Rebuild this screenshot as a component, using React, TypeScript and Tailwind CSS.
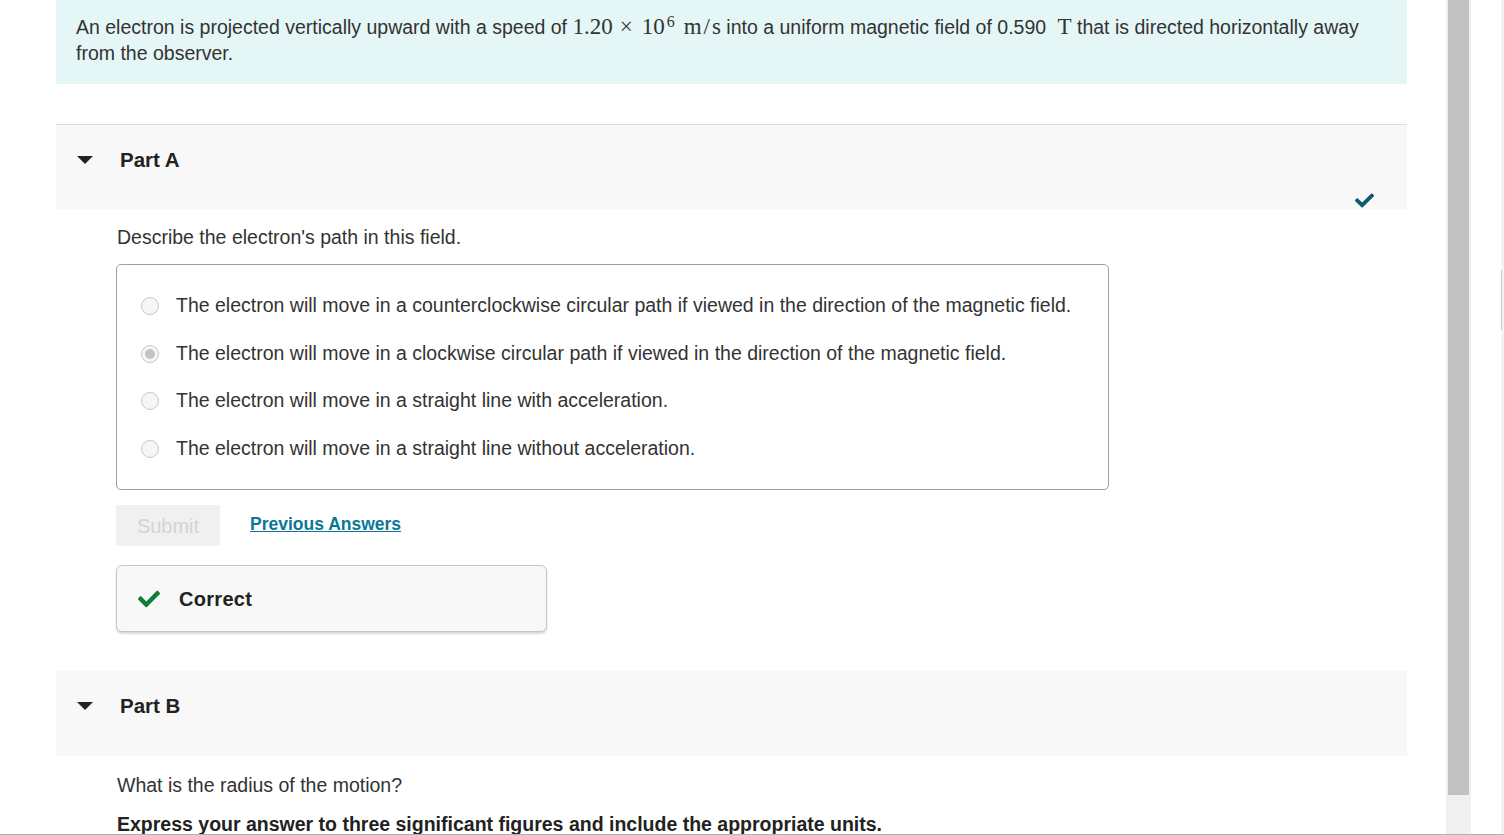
import { FaCheck } from 'react-icons/fa';

const options = [
  'The electron will move in a counterclockwise circular path if viewed in the direction of the magnetic field.',
  'The electron will move in a clockwise circular path if viewed in the direction of the magnetic field.',
  'The electron will move in a straight line with acceleration.',
  'The electron will move in a straight line without acceleration.',
];

function Caret() {
  return (
    <svg width="16" height="8" viewBox="0 0 16 8" className="shrink-0 mt-[8px]">
      <path d="M0 0 L16 0 L8 8 Z" fill="#222" />
    </svg>
  );
}

function PartHeader({ label, bordered, children }: { label: string; bordered?: boolean; children?: React.ReactNode }) {
  return (
    <div className={`relative h-[85px] bg-[#f8f8f8] flex items-start pt-[23px] pl-[21px] ${bordered ? 'border-t border-[#dcdcdc]' : ''}`}>
      <Caret />
      <span className="ml-[27px] text-[20.5px] leading-[24px] font-bold text-[#222]">{label}</span>
      {children}
    </div>
  );
}

function Radio({ selected }: { selected?: boolean }) {
  return (
    <div className="w-[18px] h-[18px] rounded-full border border-[#c8c8c8] bg-[#f6f6f6] flex items-center justify-center shrink-0">
      {selected && <div className="w-[10px] h-[10px] rounded-full bg-[#c4c4c4]" />}
    </div>
  );
}

export default function App() {
  return (
    <div className="relative w-[1504px] h-[835px] overflow-hidden bg-white text-[#333] font-['Liberation_Sans',Arial,sans-serif]">
      <div className="flex h-full">
        {/* page */}
        <div className="w-[1446px] pl-[56px] pr-[39px]">
          <div className="bg-[#e5f6f6] h-[84px] pl-[20px] pr-[40px] pt-[14px] text-[19.5px] leading-[26px] text-[#333]">
            An electron is projected vertically upward with a speed of{' '}
            <span className="font-['Liberation_Serif',serif] text-[23px]">
              1.20<span className="ml-[7px] mr-[9px]">×</span>10<sup className="text-[16px] relative -top-[7px] ml-[2px]">6</sup>
              <span className="ml-[9px]">m<span className="mx-[2px]">/</span>s</span>
            </span>{' '}
            into a uniform magnetic field of 0.590{' '}
            <span className="font-['Liberation_Serif',serif] text-[23px] ml-[6px]">T</span> that is directed horizontally away from the observer.
          </div>

          <div className="mt-[40px]">
            <PartHeader label="Part A" bordered>
              <FaCheck className="absolute right-[33px] bottom-[-1px] text-[#0e5b70] w-[19px] h-[19px]" />
            </PartHeader>
          </div>

          <div className="pl-[60px] pt-[16px]">
            <p className="text-[19.5px] leading-[24px] text-[#333] pl-[1px]">Describe the electron's path in this field.</p>

            <div className="mt-[15px] w-[993px] h-[226px] border border-[#a0a0a0] rounded-[5px] pt-[31px] pl-[24px] flex flex-col gap-[27.5px]">
              {options.map((o, i) => (
                <div key={i} className="flex items-center gap-[17px] h-[20px]">
                  <Radio selected={i === 1} />
                  <span className="text-[19.5px] text-[#333]">{o}</span>
                </div>
              ))}
            </div>

            <div className="mt-[15px] flex items-center">
              <div className="w-[104px] h-[41px] bg-[#f0f0f0] rounded-[2px] flex items-center justify-center text-[20px] text-[#d4d4d4]">Submit</div>
              <a className="ml-[30px] -mt-[2px] text-[17.5px] font-bold text-[#0b7797] underline">Previous Answers</a>
            </div>

            <div className="mt-[19px] w-[431px] h-[67px] bg-[#f8f8f8] border border-[#c4c4c4] rounded-[6px] shadow-[0_2px_2px_rgba(0,0,0,0.15)] flex items-center pl-[21px]">
              <FaCheck className="text-[#0f7d3a] w-[22px] h-[22px]" />
              <span className="ml-[19px] text-[20px] font-bold text-[#222] tracking-[0.3px]">Correct</span>
            </div>
          </div>

          <div className="mt-[39px]">
            <PartHeader label="Part B" />
          </div>

          <div className="pt-[17px] pl-[61px]">
            <p className="text-[19.5px] leading-[24px] text-[#333]">What is the radius of the motion?</p>
            <p className="mt-[15px] text-[19.5px] font-bold leading-[24px] text-[#222]">
              Express your answer to three significant figures and include the appropriate units.
            </p>
          </div>
        </div>

        {/* scrollbar */}
        <div className="w-[25px] h-full bg-[#f0f0f0] px-[2px]">
          <div className="h-[795px] bg-[#c1c1c1]" />
        </div>
        <div className="w-[30px] h-full bg-white" />
        <div className="flex-1 h-full bg-[#f3f3f3] flex flex-col">
          <div className="h-[270px]" />
          <div className="w-[1px] h-[60px] bg-[#c8c8c8]" />
        </div>
      </div>
      <div className="absolute left-0 right-0 bottom-0 h-[1px] bg-[#aab2c4]" />
    </div>
  );
}
